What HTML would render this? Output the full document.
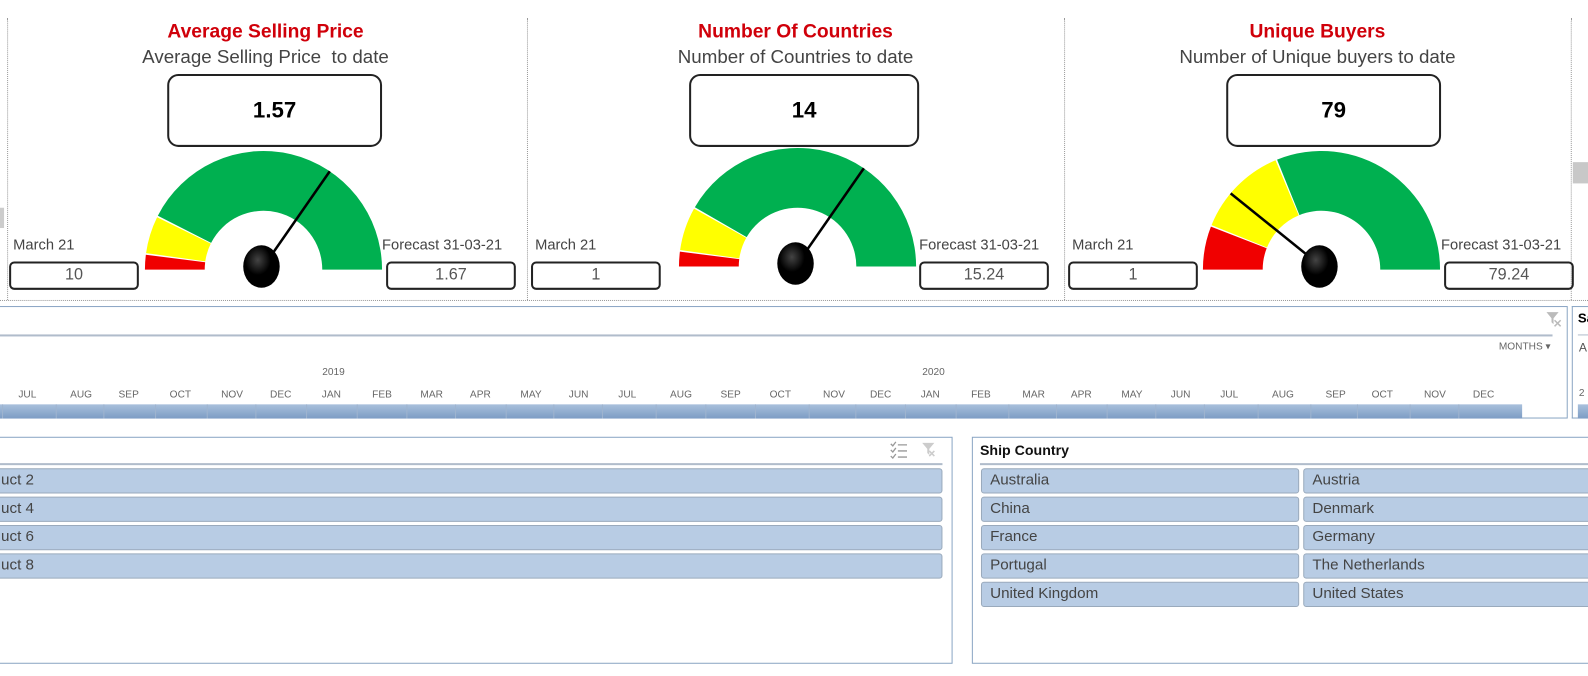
<!DOCTYPE html>
<html><head><meta charset="utf-8"><style>
html,body{margin:0;padding:0;width:1588px;height:676px;overflow:hidden;background:#fff;font-family:"Liberation Sans",sans-serif;}
#w{position:absolute;left:0;top:0;width:1567px;height:667px;transform:scale(1.0134);transform-origin:0 0;}
.a{position:absolute;}
.t1{color:#d0000a;font-weight:bold;font-size:19px;text-align:center;}
.t2{color:#444;font-size:18.5px;text-align:center;}
.big{border:2px solid #222;border-radius:11px;font-weight:bold;font-size:22px;text-align:center;line-height:68px;box-sizing:border-box;}
.sm{border:2px solid #222;border-radius:5px;font-size:16px;color:#555;text-align:center;line-height:24px;box-sizing:border-box;}
.lb{font-size:14.5px;color:#444;}
.vd{border-left:1px dotted #999;}
.m{font-size:10px;color:#666;}
.it{background:#b8cce4;border:1px solid #9aaabc;border-radius:3px;font-size:15px;color:#444;line-height:22px;box-sizing:border-box;padding-left:8px;}
</style></head><body><div id="w">
<div class="a vd" style="left:7px;top:18px;height:278px"></div>
<div class="a vd" style="left:520px;top:18px;height:278px"></div>
<div class="a vd" style="left:1050px;top:18px;height:278px"></div>
<div class="a vd" style="left:1550px;top:18px;height:278px"></div>
<div class="a" style="left:0;top:296px;width:1567px;border-top:1px dotted #999"></div>
<div class="a" style="left:0;top:205px;width:4px;height:20px;background:#ccc"></div>
<div class="a" style="left:1552px;top:160px;width:15px;height:21px;background:#c8c8c8"></div>

<div class="a t1" style="left:112px;top:21px;width:300px">Average Selling Price</div>
<div class="a t2" style="left:112px;top:45px;width:300px">Average Selling Price&nbsp; to date</div>
<div class="a big" style="left:165px;top:73px;width:212px;height:72px">1.57</div>
<div class="a lb" style="left:13px;top:234px">March 21</div>
<div class="a lb" style="left:377px;top:234px">Forecast 31-03-21</div>
<div class="a sm" style="left:9px;top:258px;width:128px;height:28px">10</div>
<div class="a sm" style="left:381px;top:258px;width:128px;height:28px">1.67</div>

<div class="a t1" style="left:635px;top:21px;width:300px">Number Of Countries</div>
<div class="a t2" style="left:635px;top:45px;width:300px">Number of Countries to date</div>
<div class="a big" style="left:680px;top:73px;width:227px;height:72px">14</div>
<div class="a lb" style="left:528px;top:234px">March 21</div>
<div class="a lb" style="left:907px;top:234px">Forecast 31-03-21</div>
<div class="a sm" style="left:524px;top:258px;width:128px;height:28px">1</div>
<div class="a sm" style="left:907px;top:258px;width:128px;height:28px">15.24</div>

<div class="a t1" style="left:1150px;top:21px;width:300px">Unique Buyers</div>
<div class="a t2" style="left:1150px;top:45px;width:300px">Number of Unique buyers to date</div>
<div class="a big" style="left:1210px;top:73px;width:212px;height:72px">79</div>
<div class="a lb" style="left:1058px;top:234px">March 21</div>
<div class="a lb" style="left:1422px;top:234px">Forecast 31-03-21</div>
<div class="a sm" style="left:1054px;top:258px;width:128px;height:28px">1</div>
<div class="a sm" style="left:1425px;top:258px;width:128px;height:28px">79.24</div>

<svg class="a" style="left:0;top:0" width="1567" height="300" id="g">
<defs><radialGradient id="kn" cx="0.4" cy="0.35" r="0.7"><stop offset="0" stop-color="#444"/><stop offset="0.5" stop-color="#000"/><stop offset="1" stop-color="#000"/></radialGradient></defs>
</svg>

<div class="a" style="left:-2px;top:302px;width:1549px;height:111px;border:1px solid #8aa5c3;box-sizing:border-box"></div>
<div class="a" style="left:0;top:330px;width:1532px;border-top:2px solid #b0bccb"></div>
<svg class="a" style="left:1524px;top:306px" width="18" height="18"><path d="M2 2h12l-5 6v6l-2-2v-4z" fill="#bbb"/><path d="M10 10l6 6M16 10l-6 6" stroke="#bbb" stroke-width="1.5"/></svg>
<div class="a m" style="left:1479px;top:337px">MONTHS ▾</div>
<div class="a m" style="left:318px;top:362px">2019</div>
<div class="a m" style="left:910px;top:362px">2020</div>
<div class="a" style="left:0;top:399px;width:1502px;height:14px;background:linear-gradient(#a8c0dc,#7d9cc4)"></div>
<div id="mo"></div>
<div class="a" style="left:1551px;top:302px;width:20px;height:111px;border:1px solid #8aa5c3;border-right:none;box-sizing:border-box"></div>
<div class="a" style="left:1557px;top:306px;font-size:13px;font-weight:bold">Sa</div>
<div class="a" style="left:1557px;top:330px;width:10px;border-top:1px solid #b0bccb"></div>
<div class="a" style="left:1558px;top:336px;font-size:12px;color:#555">A</div>
<div class="a m" style="left:1558px;top:383px">2</div>
<div class="a" style="left:1557px;top:399px;width:10px;height:14px;background:linear-gradient(#a8c0dc,#7d9cc4)"></div>

<div class="a" style="left:-2px;top:431px;width:942px;height:224px;border:1px solid #8aa5c3;box-sizing:border-box"></div>
<div class="a" style="left:0;top:457px;width:930px;border-top:2px solid #b0bccb"></div>
<svg class="a" style="left:876px;top:434px" width="50" height="20"><g stroke="#999" stroke-width="1.3" fill="none"><path d="M3 4l2 2 3-4M3 10l2 2 3-4M3 16l2 2 3-4M10 5h9M10 11h9M10 17h9"/></g><path d="M34 3h12l-5 6v6l-2-2v-4z" fill="#ccc"/><path d="M41 11l5 5M46 11l-5 5" stroke="#ccc" stroke-width="1.5"/></svg>
<div class="a it" style="left:-10px;top:462px;width:940px;height:25px;padding-left:10px">uct 2</div>
<div class="a it" style="left:-10px;top:490px;width:940px;height:25px;padding-left:10px">uct 4</div>
<div class="a it" style="left:-10px;top:518px;width:940px;height:25px;padding-left:10px">uct 6</div>
<div class="a it" style="left:-10px;top:546px;width:940px;height:25px;padding-left:10px">uct 8</div>

<div class="a" style="left:959px;top:431px;width:620px;height:224px;border:1px solid #8aa5c3;box-sizing:border-box"></div>
<div class="a" style="left:967px;top:436px;font-size:14px;font-weight:bold;color:#111">Ship Country</div>
<div class="a" style="left:967px;top:457px;width:610px;border-top:2px solid #b0bccb"></div>
<div class="a it" style="left:968px;top:462px;width:314px;height:25px">Australia</div>
<div class="a it" style="left:1286px;top:462px;width:300px;height:25px">Austria</div>
<div class="a it" style="left:968px;top:490px;width:314px;height:25px">China</div>
<div class="a it" style="left:1286px;top:490px;width:300px;height:25px">Denmark</div>
<div class="a it" style="left:968px;top:518px;width:314px;height:25px">France</div>
<div class="a it" style="left:1286px;top:518px;width:300px;height:25px">Germany</div>
<div class="a it" style="left:968px;top:546px;width:314px;height:25px">Portugal</div>
<div class="a it" style="left:1286px;top:546px;width:300px;height:25px">The Netherlands</div>
<div class="a it" style="left:968px;top:574px;width:314px;height:25px">United Kingdom</div>
<div class="a it" style="left:1286px;top:574px;width:300px;height:25px">United States</div>
</div>
<script>
var NS="http://www.w3.org/2000/svg",g=document.getElementById('g');
function P(cx,cy,r,a){a=a*Math.PI/180;return [cx-r*Math.cos(a),cy-r*Math.sin(a)];}
function arc(cx,cy,ro,ri,a0,a1,c){var p0=P(cx,cy,ro,a0),p1=P(cx,cy,ro,a1),q1=P(cx,cy,ri,a1),q0=P(cx,cy,ri,a0);
var e=document.createElementNS(NS,'path');e.setAttribute('d','M'+p0+'A'+ro+','+ro+' 0 0 1 '+p1+'L'+q1+'A'+ri+','+ri+' 0 0 0 '+q0+'Z');e.setAttribute('fill',c);g.appendChild(e);}
function gauge(cx,cy,r1,y1,na){arc(cx,cy,117,58,0,r1-0.8,'#f00000');arc(cx,cy,117,58,r1,y1-0.8,'#ffff00');arc(cx,cy,117,58,y1,180,'#00b050');
var n=P(cx,cy,117,na),l=document.createElementNS(NS,'line');l.setAttribute('x1',cx);l.setAttribute('y1',cy-3);l.setAttribute('x2',n[0]);l.setAttribute('y2',n[1]);l.setAttribute('stroke','#000');l.setAttribute('stroke-width','2.5');g.appendChild(l);
var k=document.createElementNS(NS,'ellipse');k.setAttribute('cx',cx-2);k.setAttribute('cy',cy-3);k.setAttribute('rx',18);k.setAttribute('ry',21);k.setAttribute('fill','url(#kn)');g.appendChild(k);}
gauge(260,266,8,27,124);gauge(787,263,8,30,124);gauge(1304,266,22,68,40);
var ms=[["JUL",27],["AUG",80],["SEP",127],["OCT",178],["NOV",229],["DEC",277],["JAN",327],["FEB",377],["MAR",426],["APR",474],["MAY",524],["JUN",571],["JUL",619],["AUG",672],["SEP",721],["OCT",770],["NOV",823],["DEC",869],["JAN",918],["FEB",968],["MAR",1020],["APR",1067],["MAY",1117],["JUN",1165],["JUL",1213],["AUG",1266],["SEP",1318],["OCT",1364],["NOV",1416],["DEC",1464]],h='';
ms.forEach(function(m){h+='<div class="a m" style="left:'+(m[1]-20)+'px;width:40px;text-align:center;top:384px">'+m[0]+'</div><div class="a" style="left:'+(m[1]-25)+'px;top:399px;width:1px;height:14px;background:#9fb4cf"></div>';});
document.getElementById('mo').outerHTML=h;
</script>
</body></html>
